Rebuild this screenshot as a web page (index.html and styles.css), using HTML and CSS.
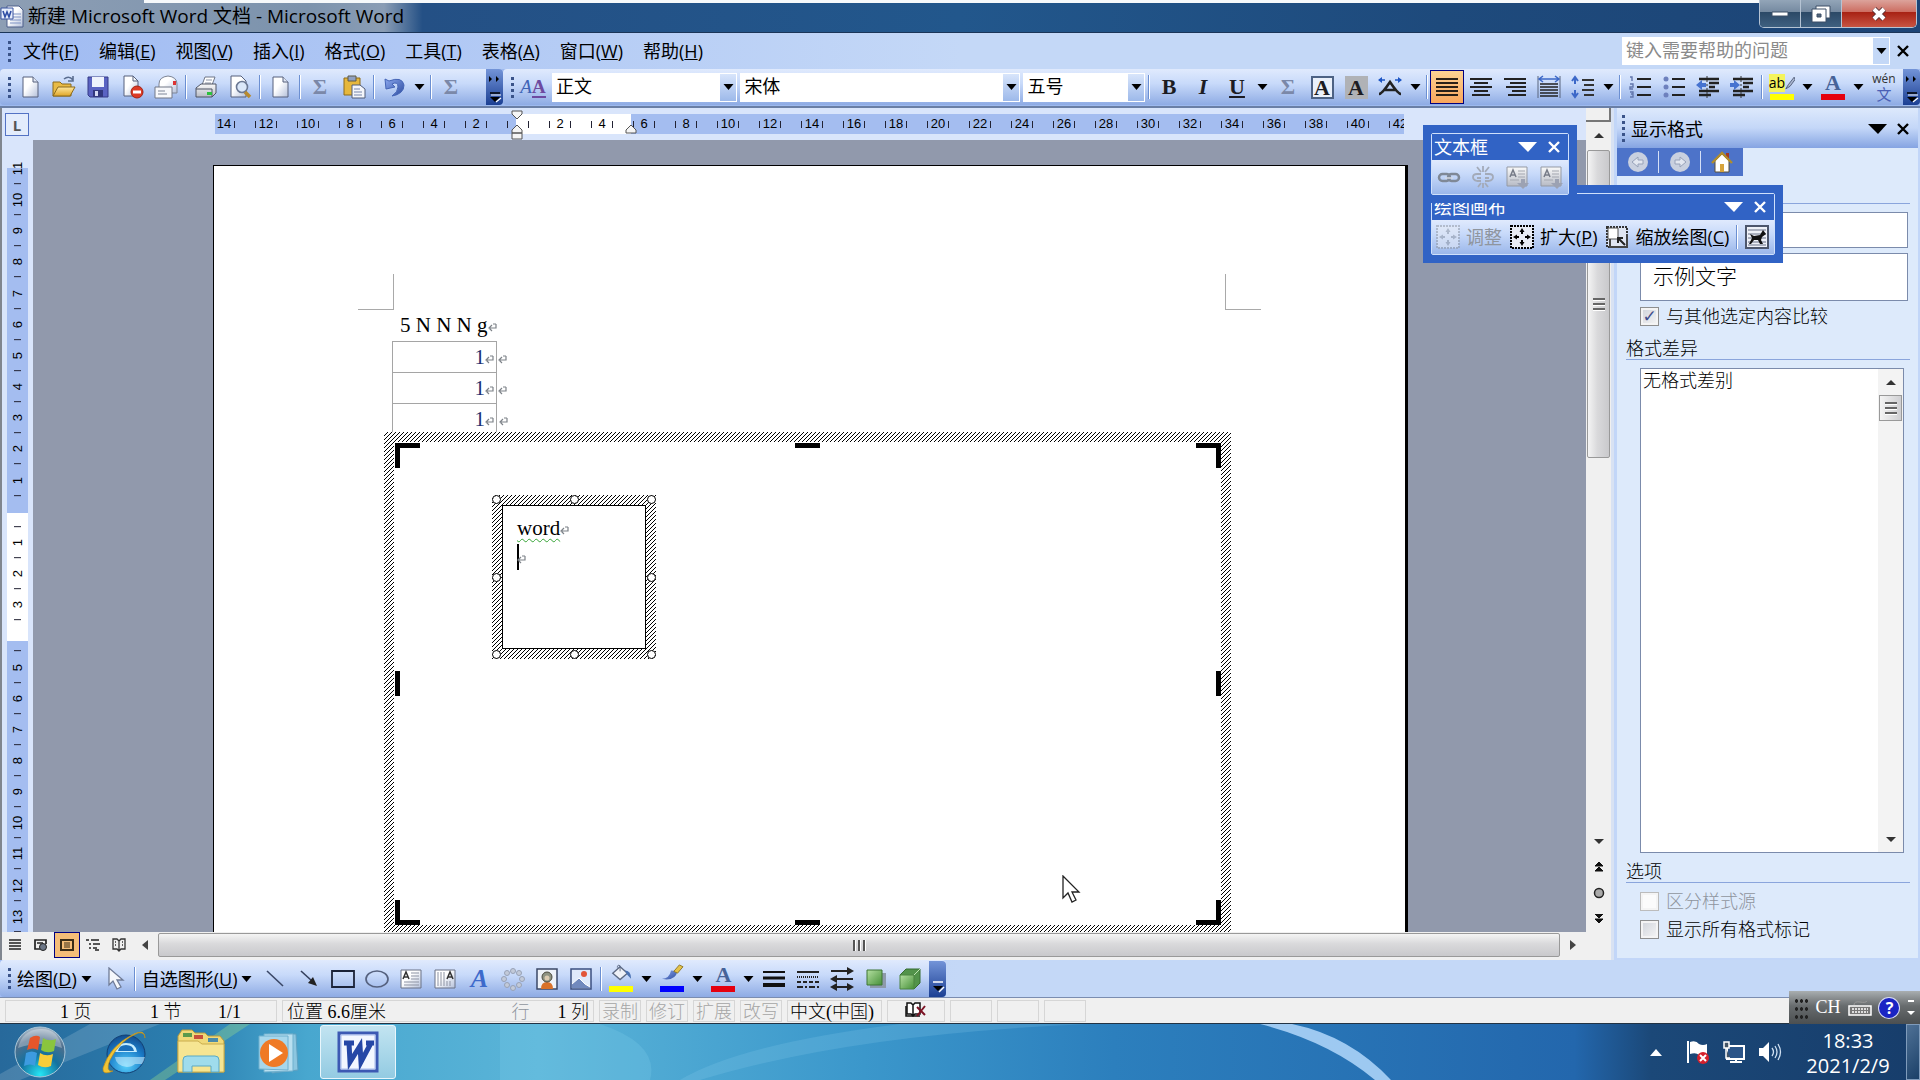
FILE: index.html
```html
<!DOCTYPE html>
<html lang="zh-CN">

<head>
    <meta charset="UTF-8">
    <meta name="viewport" content="width=device-width, initial-scale=1.0">
    <title>新建 Microsoft Word 文档 - Microsoft Word</title>
    <link rel="stylesheet" href="styles.css">
</head>

<body>
    <!-- shared symbols -->
    <svg class="defs" aria-hidden="true">
        <defs>
            <linearGradient id="gPage" x1="0" y1="0" x2="1" y2="1"><stop offset="0.4" stop-color="#fff"/><stop offset="1" stop-color="#b4c0da"/></linearGradient>
            <linearGradient id="gFolder" x1="0" y1="0" x2="0" y2="1"><stop offset="0" stop-color="#ffe9a0"/><stop offset="1" stop-color="#e0a526"/></linearGradient>
            <linearGradient id="gBlue" x1="0" y1="0" x2="1" y2="1"><stop offset="0" stop-color="#8ba7ee"/><stop offset="1" stop-color="#2c4b9f"/></linearGradient>
            <linearGradient id="gGreen" x1="0" y1="0" x2="1" y2="1"><stop offset="0" stop-color="#b5e0a2"/><stop offset="1" stop-color="#469038"/></linearGradient>
            <linearGradient id="gGray" x1="0" y1="0" x2="0" y2="1"><stop offset="0" stop-color="#fafafa"/><stop offset="1" stop-color="#b6bac4"/></linearGradient>
            <radialGradient id="gOrb" cx="0.5" cy="0.95" r="0.9"><stop offset="0" stop-color="#25e6f5"/><stop offset="0.45" stop-color="#14719f"/><stop offset="0.8" stop-color="#4f6f8d"/><stop offset="1" stop-color="#9fb1c2"/></radialGradient>
            <radialGradient id="gIe" cx="0.5" cy="0.8" r="0.8"><stop offset="0" stop-color="#58d0fb"/><stop offset="0.6" stop-color="#1a7cc9"/><stop offset="1" stop-color="#134b8c"/></radialGradient>
            <symbol id="caret" viewBox="0 0 10 6"><path d="M0 0h10L5 6z"/></symbol>
            <symbol id="cross" viewBox="0 0 12 12"><path d="M1 1l10 10M11 1L1 11" fill="none" stroke="currentColor" stroke-width="2.4"/></symbol>
            <symbol id="para" viewBox="0 0 9 9"><path d="M8 1v4H2M4 2L1 5l3 3M5 1h3" fill="none" stroke="#7d8288" stroke-width="1.2"/></symbol>
            <symbol id="page" viewBox="0 0 24 24"><path d="M5 2h10l5 5v15H5z" fill="url(#gPage)" stroke="#56617c"/><path d="M15 2v5h5" fill="#dfe6f4" stroke="#56617c"/></symbol>
            <symbol id="more" viewBox="0 0 17 36"><path d="M3 7l3 3-3 3zM10 7l3 3-3 3z" fill="#000"/><path d="M4 24h10" stroke="#000" stroke-width="1.5"/><path d="M4 28h10l-5 5z" fill="#000"/><path d="M5 26h10M10 33l5-4" stroke="#fff" stroke-width="1.2"/></symbol>
            <symbol id="fit" viewBox="0 0 24 24"><path d="M1 1h22v22H1z" fill="#e8ecf5" stroke="currentColor" stroke-width="2" stroke-dasharray="2 1"/><path d="M12 5v4M12 15v4M5 12h4M15 12h4" stroke="currentColor" stroke-width="2"/><path d="M9.500 7L12 3l2.500 4zM9.500 17l2.500 4 2.500-4zM7 9.500L3 12l4 2.500zM17 9.500l4 2.500-4 2.500z" fill="currentColor"/></symbol>
            <symbol id="memo" viewBox="0 0 24 24"><path d="M2 2h20v19H2z" fill="url(#gGray)" stroke="#9499a3"/><path d="M5 12L8 5l3 7M6 10h4" stroke="#777c88" stroke-width="1.500" fill="none"/><path d="M13 6h7M13 9h7M13 12h7M5 15h9" stroke="#a3a7b0"/><path d="M18 14v5" stroke="#9ca2b3" stroke-width="4"/><path d="M12 18h12l-6 6z" fill="#9ca2b3"/></symbol>
        </defs>
    </svg>

    <header class="titlebar">
        <svg class="icon" viewBox="0 0 24 24"><path d="M7 2h12l4 4v17H7z" fill="url(#gPage)" stroke="#4d5e8a"/><path d="M13 10h8M13 13h8M10 16h11M10 19h11" stroke="#7f93c4"/><path d="M1 4h12v11H1z" fill="#e7eefc" stroke="#3a55a0"/><path d="M3 7l2 6 2-5 2 5 2-6" fill="none" stroke="#2e4da5" stroke-width="1.600"/></svg>
        <h1>新建 Microsoft Word 文档 - Microsoft Word</h1>
        <div class="window-buttons">
            <button aria-label="最小化"><svg width="18" height="6"><path d="M1 1h16v4H1z" fill="#fff" stroke="#3c4f66"/></svg></button>
            <button aria-label="还原"><svg width="20" height="18"><path d="M5 1h14v12H5z" fill="#fff" stroke="#3c4f66"/><path d="M1 4h14v13H1z" fill="#fff" stroke="#3c4f66"/><path d="M6 9h4v3H6z" fill="#53677d" stroke="#3c4f66"/></svg></button>
            <button class="close" aria-label="关闭"><svg width="18" height="16"><path d="M4 3l10 10M14 3L4 13" stroke="#5b3337" stroke-width="6"/><path d="M4 3l10 10M14 3L4 13" stroke="#fff" stroke-width="4"/></svg></button>
        </div>
    </header>

    <nav class="menubar">
        <i class="grip"></i>
        <button>文件(<u>F</u>)</button>
        <button>编辑(<u>E</u>)</button>
        <button>视图(<u>V</u>)</button>
        <button>插入(<u>I</u>)</button>
        <button>格式(<u>O</u>)</button>
        <button>工具(<u>T</u>)</button>
        <button>表格(<u>A</u>)</button>
        <button>窗口(<u>W</u>)</button>
        <button>帮助(<u>H</u>)</button>
        <div class="help-box">
            <input type="text" aria-label="帮助" placeholder="键入需要帮助的问题">
            <button class="drop" aria-label="展开"><svg width="11" height="6"><use href="#caret"/></svg></button>
        </div>
        <button class="close-doc" aria-label="关闭文档"><svg width="12" height="12"><use href="#cross"/></svg></button>
    </nav>

    <div class="toolbars">
        <div class="toolbar standard">
            <i class="grip"></i>
            <button class="tool" aria-label="新建"><svg class="icon"><use href="#page"/></svg></button>
            <button class="tool" aria-label="打开"><svg class="icon" viewBox="0 0 24 24"><path d="M1 21V7h7l2 2h9v12z" fill="#e9bb45" stroke="#8b6a1c"/><path d="M1 21l5-9h17l-5 9z" fill="url(#gFolder)" stroke="#8b6a1c"/><path d="M12 4q5-4 9 1M21 1v5h-5" fill="none" stroke="#5a6d8f" stroke-width="1.600"/></svg></button>
            <button class="tool" aria-label="保存"><svg class="icon" viewBox="0 0 24 24"><path d="M2 2h20v20H4l-2-2z" fill="#5a63c2" stroke="#343a86"/><path d="M6 2h12v10H6z" fill="#eef2fc"/><path d="M7 15h10v7H7z" fill="#32387e"/><path d="M9 16h3v5H9z" fill="#d6dcf4"/></svg></button>
            <button class="tool" aria-label="权限"><svg class="icon" viewBox="0 0 24 24"><path d="M4 1h9l5 5v15H4z" fill="url(#gPage)" stroke="#56617c"/><path d="M13 1v5h5" fill="none" stroke="#56617c"/><circle cx="17" cy="17" r="6" fill="#dc3a25" stroke="#a32213"/><path d="M13 17h8" stroke="#fff" stroke-width="3"/></svg></button>
            <button class="tool" aria-label="电子邮件"><svg class="icon" viewBox="0 0 24 24"><path d="M5 9q0-7 9-8 9 1 9 8v9H5z" fill="url(#gPage)" stroke="#7e8594"/><path d="M19 6h3v4h-3z" fill="#d33"/><path d="M1 12h17v11H1z" fill="#f7f8fb" stroke="#737987"/><path d="M4 16h7M4 19h9" stroke="#7c8597"/></svg></button>
            <i class="sep"></i>
            <button class="tool" aria-label="打印"><svg class="icon" viewBox="0 0 24 24"><path d="M8 10l3-8h10l-3 8z" fill="#fff" stroke="#6f7788"/><path d="M12 5h6M11 8h6" stroke="#8d95a7"/><path d="M2 13l5-4h15v9l-4 4H2z" fill="url(#gGray)" stroke="#4e5564"/><path d="M2 14h16v8" fill="none" stroke="#4e5564"/><path d="M13 17h5v3h-5z" fill="#2cc13c"/></svg></button>
            <button class="tool" aria-label="打印预览"><svg class="icon" viewBox="0 0 24 24"><path d="M3 1h10l5 5v16H3z" fill="url(#gPage)" stroke="#56617c"/><circle cx="14" cy="12" r="5.500" fill="#dbe8fa" stroke="#6b7893" stroke-width="1.600"/><path d="M17 17l5 5" stroke="#b88a2e" stroke-width="3.500"/></svg></button>
            <i class="sep"></i>
            <button class="tool" aria-label="新建空白文档"><svg class="icon"><use href="#page"/></svg></button>
            <i class="sep"></i>
            <button class="tool sigma">Σ</button>
            <button class="tool" aria-label="粘贴"><svg class="icon" viewBox="0 0 24 24"><path d="M2 3h16v17H2z" fill="#e6b73c" stroke="#8d6a18"/><path d="M6 1h8v5H6z" fill="#8fa0c2" stroke="#5f5a44"/><path d="M10 10h8l5 4v9H10z" fill="#f4f6fb" stroke="#515c78"/><path d="M12 14h6M12 17h8M12 20h8" stroke="#7685ab"/></svg></button>
            <i class="sep"></i>
            <button class="tool" aria-label="撤消"><svg class="icon" viewBox="0 0 24 24"><path d="M3 4l1 10 9-2-3-3q6-3 6 3 0 5-6 9 12-2 12-11Q20 1 7 6z" fill="url(#gBlue)" stroke="#4565b6"/></svg></button>
            <button class="arrow" aria-label="撤消列表"><svg width="11" height="6"><use href="#caret"/></svg></button>
            <i class="sep"></i>
            <button class="tool sigma">Σ</button>
            <button class="cap" aria-label="工具栏选项"><svg width="17" height="36"><use href="#more"/></svg></button>
        </div>
        <div class="toolbar format">
            <i class="grip"></i>
            <button class="tool styles-btn" aria-label="格式窗格"><i>A</i><b>A</b></button>
            <div class="combo style-combo"><select aria-label="样式"><option>正文</option></select><span class="drop"><svg width="11" height="6"><use href="#caret"/></svg></span></div>
            <div class="combo font-combo"><select aria-label="字体"><option>宋体</option></select><span class="drop"><svg width="11" height="6"><use href="#caret"/></svg></span></div>
            <div class="combo size-combo"><select aria-label="字号"><option>五号</option></select><span class="drop"><svg width="11" height="6"><use href="#caret"/></svg></span></div>
            <i class="sep"></i>
            <button class="tool letter"><b>B</b></button>
            <button class="tool letter"><b><i>I</i></b></button>
            <button class="tool letter"><b><u>U</u></b></button>
            <button class="arrow" aria-label="下划线样式"><svg width="11" height="6"><use href="#caret"/></svg></button>
            <button class="tool sigma">Σ</button>
            <button class="tool letter"><span class="boxed">A</span></button>
            <button class="tool letter"><span class="boxed shaded">A</span></button>
            <button class="tool" aria-label="字符缩放"><svg class="icon" viewBox="0 0 24 24"><path d="M1 19q3 0 11-12 8 12 11 12M7 15h10" fill="none" stroke="#222" stroke-width="2.600"/><path d="M1 5h6M17 5h6" stroke="#1d55c4" stroke-width="1.500"/><path d="M4 2L0 5l4 3zM20 2l4 3-4 3z" fill="#1d55c4"/></svg></button>
            <button class="arrow" aria-label="缩放列表"><svg width="11" height="6"><use href="#caret"/></svg></button>
            <i class="sep"></i>
            <button class="tool active" aria-label="两端对齐"><svg class="icon" viewBox="0 0 24 24"><path d="M1 4h22M1 8h22M1 12h22M1 16h22M1 20h22" stroke="#2a2118" stroke-width="2"/></svg></button>
            <button class="tool" aria-label="居中"><svg class="icon" viewBox="0 0 24 24"><path d="M1 4h22M5 8h14M1 12h22M5 16h14M3 20h18" stroke="#222" stroke-width="2"/></svg></button>
            <button class="tool" aria-label="右对齐"><svg class="icon" viewBox="0 0 24 24"><path d="M1 4h22M7 8h16M3 12h20M9 16h14M5 20h18" stroke="#222" stroke-width="2"/></svg></button>
            <button class="tool" aria-label="分散对齐"><svg class="icon" viewBox="0 0 24 24"><path d="M1 1v22M23 1v22" stroke="#59647d"/><path d="M3 4h18M6 1L2 4l4 3M18 1l4 3-4 3" fill="none" stroke="#3c68c8" stroke-width="1.500"/><path d="M3 9h18M3 12h18M3 15h18M3 18h18M3 21h18" stroke="#222" stroke-width="1.700"/></svg></button>
            <button class="tool" aria-label="行距"><svg class="icon" viewBox="0 0 24 24"><path d="M4 3v6M4 15v6M1 6l3-4 3 4M1 18l3 4 3-4" fill="none" stroke="#3c68c8" stroke-width="2"/><path d="M11 5h12M13 10h10M11 15h12M13 20h10" stroke="#333" stroke-width="2"/></svg></button>
            <button class="arrow" aria-label="行距列表"><svg width="11" height="6"><use href="#caret"/></svg></button>
            <i class="sep"></i>
            <button class="tool" aria-label="编号"><svg class="icon" viewBox="0 0 24 24"><path d="M9 4h14M9 12h14M9 20h14" stroke="#222" stroke-width="2"/><path d="M2 2h2v4M2 9h3v3H2v2h3M2 17h3v5H2M3 19h2" fill="none" stroke="#6276ac" stroke-width="1.400"/></svg></button>
            <button class="tool" aria-label="项目符号"><svg class="icon" viewBox="0 0 24 24"><path d="M10 4h13M10 12h13M10 20h13" stroke="#222" stroke-width="2"/><g fill="#6d80bd"><circle cx="4" cy="4" r="2.500"/><circle cx="4" cy="12" r="2.500"/><circle cx="4" cy="20" r="2.500"/></g></svg></button>
            <button class="tool" aria-label="减少缩进量"><svg class="icon" viewBox="0 0 24 24"><path d="M3 4h20M13 8h10M13 12h6M3 16h20M3 20h12" stroke="#222" stroke-width="2.400"/><path d="M11 1v22" stroke="#333" stroke-dasharray="2 2"/><path d="M0 10l6-5v3h4v4H6v3z" fill="#4673d0"/></svg></button>
            <button class="tool" aria-label="增加缩进量"><svg class="icon" viewBox="0 0 24 24"><path d="M3 4h20M13 8h10M13 12h6M3 16h20M3 20h12" stroke="#222" stroke-width="2.400"/><path d="M11 1v22" stroke="#333" stroke-dasharray="2 2"/><path d="M10 10L4 5v3H0v4h4v3z" fill="#4673d0"/></svg></button>
            <i class="sep"></i>
            <button class="tool color-tool yellow"><span class="mark">ab</span><svg class="pen" width="10" height="16" viewBox="0 0 12 16"><path d="M11 1L4 10l-3 5 5-3 6-8z" fill="#a9b5cf" stroke="#46536f"/></svg></button>
            <button class="arrow" aria-label="突出显示颜色"><svg width="11" height="6"><use href="#caret"/></svg></button>
            <button class="tool color-tool red"><b>A</b></button>
            <button class="arrow" aria-label="字体颜色列表"><svg width="11" height="6"><use href="#caret"/></svg></button>
            <button class="tool pinyin"><span>wén</span><span>文</span></button>
            <button class="cap" aria-label="工具栏选项"><svg width="17" height="36"><use href="#more"/></svg></button>
        </div>
    </div>

    <main class="workspace">
        <section class="editor">
            <div class="ruler-row">
                <button class="tab-stop">L</button>
                <div class="h-ruler">
                    <div class="h-cells">
                        <span>14</span><span>12</span><span>10</span><span>8</span><span>6</span><span>4</span><span>2</span><span></span><span>2</span><span>4</span><span>6</span><span>8</span><span>10</span><span>12</span><span>14</span><span>16</span><span>18</span><span>20</span><span>22</span><span>24</span><span>26</span><span>28</span><span>30</span><span>32</span><span>34</span><span>36</span><span>38</span><span>40</span><span>42</span>
                    </div>
                    <svg class="indent left-indent" width="12" height="30"><path d="M1 1h10v3L6 9 1 4zM6 15l5 5v3H1v-3zM1 23h10v6H1z" fill="#f5f5f5" stroke="#555"/></svg>
                    <svg class="indent right-indent" width="12" height="10"><path d="M6 1l5 5v3H1V6z" fill="#f5f5f5" stroke="#555"/></svg>
                </div>
            </div>
            <div class="doc-row">
                <div class="v-ruler">
                    <div class="v-cells">
                        <span>11</span><span>10</span><span>9</span><span>8</span><span>7</span><span>6</span><span>5</span><span>4</span><span>3</span><span>2</span><span>1</span><span></span><span>1</span><span>2</span><span>3</span><span></span><span>5</span><span>6</span><span>7</span><span>8</span><span>9</span><span>10</span><span>11</span><span>12</span><span>13</span>
                    </div>
                </div>
                <div class="desk">
                    <article class="sheet">
                        <div class="crop-marks"><i></i><i></i></div>
                        <p class="doc-line">5 N N N g<svg class="para"><use href="#para"/></svg></p>
                        <table class="doc-table">
                            <tr><td>1<svg class="para"><use href="#para"/></svg></td><td class="row-end"><svg class="para"><use href="#para"/></svg></td></tr>
                            <tr><td>1<svg class="para"><use href="#para"/></svg></td><td class="row-end"><svg class="para"><use href="#para"/></svg></td></tr>
                            <tr><td>1<svg class="para"><use href="#para"/></svg></td><td class="row-end"><svg class="para"><use href="#para"/></svg></td></tr>
                        </table>
                        <div class="canvas">
                            <div class="canvas-inner">
                                <i class="hold tl"></i><i class="hold tc"></i><i class="hold tr"></i>
                                <i class="hold ml"></i><i class="hold mr"></i>
                                <i class="hold bl"></i><i class="hold bc"></i><i class="hold br"></i>
                                <div class="text-box">
                                    <div class="text-body">
                                        <p><span class="typo">word</span><svg class="para"><use href="#para"/></svg></p>
                                        <p class="cursor-line"><svg class="para"><use href="#para"/></svg></p>
                                    </div>
                                    <i class="dot d1"></i><i class="dot d2"></i><i class="dot d3"></i><i class="dot d4"></i>
                                    <i class="dot d5"></i><i class="dot d6"></i><i class="dot d7"></i><i class="dot d8"></i>
                                </div>
                                <svg class="pointer" width="19" height="29" viewBox="0 0 19 29"><path d="M1 1v22l5-5 4 9 4-2-4-8h7z" fill="#fff" stroke="#222" stroke-width="1.300"/></svg>
                            </div>
                        </div>
                    </article>
                </div>
            </div>
            <div class="h-scroll">
                <button aria-label="普通视图"><svg width="16" height="16"><path d="M2 3h12M2 6h12M2 9h12M2 12h12" stroke="#222" stroke-width="1.500"/></svg></button>
                <button aria-label="Web 版式视图"><svg width="16" height="16"><path d="M7 12H2V3h11v4M4 6h6" fill="none" stroke="#222" stroke-width="1.700"/><circle cx="10" cy="10" r="3.500" fill="#6c7686" stroke="#222"/></svg></button>
                <button class="active" aria-label="页面视图"><svg width="16" height="16"><path d="M2 3h12v10H2z" fill="none" stroke="#3b2c16" stroke-width="2"/><path d="M5 6h6M5 8h6M5 10h6" stroke="#3b2c16"/></svg></button>
                <button aria-label="大纲视图"><svg width="16" height="16"><path d="M1 3h3M6 3h8M4 7h2M8 7h7M4 11h2M8 11h4M10 13h4" stroke="#222" stroke-width="1.700"/></svg></button>
                <button aria-label="阅读版式"><svg width="16" height="16"><path d="M8 4L6 2H2v10h4l2 2 2-2h4V2h-4zM8 4v10M4 5h1M4 8h1M11 5h1M11 8h1" fill="none" stroke="#333" stroke-width="1.300"/></svg></button>
                <button aria-label="向左滚动"><svg width="6" height="10"><path d="M6 0v10L0 5z" fill="#444"/></svg></button>
                <div class="h-thumb"><i></i><i></i><i></i></div>
                <button aria-label="向右滚动"><svg width="6" height="10"><path d="M0 0v10l6-5z" fill="#444"/></svg></button>
            </div>
        </section>

        <div class="v-scroll">
            <div class="split"></div>
            <button aria-label="向上滚动"><svg width="10" height="5"><path d="M0 5h10L5 0z" fill="#333"/></svg></button>
            <div class="v-track"><div class="v-thumb"><i></i><i></i><i></i></div></div>
            <button aria-label="向下滚动"><svg width="10" height="5"><path d="M0 0h10L5 5z" fill="#333"/></svg></button>
            <button aria-label="前一页"><svg width="10" height="10"><path d="M5 0l4 4H1zM5 5l4 4H1z" fill="#111" stroke="#111"/></svg></button>
            <button aria-label="选择浏览对象"><svg width="12" height="12"><circle cx="6" cy="6" r="4.500" fill="#aaa" stroke="#222" stroke-width="1.500"/></svg></button>
            <button aria-label="下一页"><svg width="10" height="10"><path d="M5 4l4-4H1zM5 9l4-4H1z" fill="#111" stroke="#111"/></svg></button>
        </div>

        <aside class="pane">
            <div class="pane-head">
                <i class="grip"></i>
                <h2>显示格式</h2>
                <button aria-label="其他任务窗格"><svg width="19" height="10"><path d="M0 0h19l-9 10z"/></svg></button>
                <button aria-label="关闭窗格"><svg width="12" height="12"><use href="#cross"/></svg></button>
            </div>
            <div class="pane-nav">
                <button aria-label="后退"><svg width="22" height="22"><circle cx="11" cy="11" r="10" fill="#c9d0df"/><path d="M16 9h-5V6l-6 5 6 5v-3h5z" fill="#e3e7f0" stroke="#98a2b9"/></svg></button>
                <button aria-label="前进"><svg width="22" height="22"><circle cx="11" cy="11" r="10" fill="#c9d0df"/><path d="M6 9h5V6l6 5-6 5v-3H6z" fill="#e3e7f0" stroke="#98a2b9"/></svg></button>
                <button aria-label="开始"><svg width="22" height="22"><path d="M15 2h3v6h-3z" fill="#a03a28"/><path d="M4 10l7-7 7 7v11H4z" fill="#fff" stroke="#5a5136"/><path d="M1 12L11 2l10 10" fill="none" stroke="#b08d2c" stroke-width="2.400"/><path d="M9 13h4v8H9z" fill="#d6a33c"/></svg></button>
            </div>
            <div class="pane-body">
                <div class="pane-rule first"></div>
                <div class="sample"></div>
                <div class="sample tall">示例文字</div>
                <label class="check"><input type="checkbox" checked>与其他选定内容比较</label>
                <h3 class="pane-rule">格式差异</h3>
                <div class="diff-list">
                    <p>无格式差别</p>
                    <div class="list-scroll">
                        <button aria-label="向上"><svg width="10" height="5"><path d="M0 5h10L5 0z" fill="#333"/></svg></button>
                        <div class="list-thumb"><i></i><i></i><i></i></div>
                        <button class="down" aria-label="向下"><svg width="10" height="5"><path d="M0 0h10L5 5z" fill="#333"/></svg></button>
                    </div>
                </div>
                <h3 class="pane-rule options">选项</h3>
                <label class="check off"><input type="checkbox" disabled>区分样式源</label>
                <label class="check"><input type="checkbox">显示所有格式标记</label>
            </div>
        </aside>

        <!-- floating toolbars -->
        <div class="float float-canvas">
            <div class="float-box">
                <div class="float-head"><span>绘图画布</span><button aria-label="选项"><svg width="19" height="10"><path d="M0 0h19l-9 10z" fill="#fff"/></svg></button><button aria-label="关闭"><svg width="12" height="12"><use href="#cross"/></svg></button></div>
                <div class="float-tools">
                    <button class="text-tool off"><svg class="icon"><use href="#fit"/></svg>调整</button>
                    <button class="text-tool"><svg class="icon"><use href="#fit"/></svg><span>扩大(<u>P</u>)</span></button>
                    <button class="text-tool"><svg class="icon" viewBox="0 0 24 24"><path d="M2 2h20v20H2z" fill="#dfe5f2" stroke="#333" stroke-width="2" stroke-dasharray="2 1"/><path d="M3 3h10v11H3z" fill="#fff" stroke="#555"/><path d="M5 14v8h17V9" fill="none" stroke="#444" stroke-width="2"/><path d="M20 20l-6-6M13 18v-5h5" fill="none" stroke="#222" stroke-width="2"/></svg><span>缩放绘图(<u>C</u>)</span></button>
                    <i class="sep"></i>
                    <button class="tool" aria-label="文字环绕"><svg class="icon" viewBox="0 0 24 24"><path d="M1 1h22v22H1z" fill="#eef1f8" stroke="#4c566c" stroke-width="2"/><path d="M3 5h18M3 9h18M3 13h18M3 17h18M3 20h18" stroke="#687086"/><path d="M5 9l4 2 6-1 3-5 3 4-4 3-1 3 2 4h-3l-2-4H9l-3 4H4l3-6z" fill="#111"/></svg></button>
                </div>
            </div>
        </div>
        <div class="float float-textbox">
            <div class="float-box">
                <div class="float-head"><span>文本框</span><button aria-label="选项"><svg width="19" height="10"><path d="M0 0h19l-9 10z" fill="#fff"/></svg></button><button aria-label="关闭"><svg width="12" height="12"><use href="#cross"/></svg></button></div>
                <div class="float-tools">
                    <button class="tool" aria-label="创建链接"><svg class="icon" viewBox="0 0 24 24"><g fill="none" stroke="#7f8896" stroke-width="2.500"><rect x="2" y="9" width="11" height="7" rx="3.500"/><rect x="11" y="9" width="11" height="7" rx="3.500"/></g><path d="M8 13h8" stroke="#d5dae4" stroke-width="1.500"/></svg></button>
                    <button class="tool" aria-label="断开链接"><svg class="icon" viewBox="0 0 24 24"><path d="M10 9H6q-4 0-4 3t4 4h4M14 9h4q4 0 4 3t-4 4h-4M12 1v6M6 2l4 5M18 2l-4 5M12 18v5M10 18l-3 4M14 18l3 4M6 13h4M14 13h4" fill="none" stroke="#a3aab8" stroke-width="1.800"/></svg></button>
                    <button class="tool" aria-label="前一文本框"><svg class="icon"><use href="#memo"/></svg></button>
                    <button class="tool" aria-label="下一文本框"><svg class="icon"><use href="#memo"/></svg></button>
                </div>
            </div>
        </div>
    </main>

    <div class="draw-row">
        <div class="toolbar drawing">
            <i class="grip"></i>
            <button class="menu-tool"><span>绘图(<u>D</u>)</span><svg width="11" height="6"><use href="#caret"/></svg></button>
            <button class="tool" aria-label="选择对象"><svg class="icon" viewBox="0 0 24 24"><path d="M6 1v17l4-4 4 8 4-2-4-7h6z" fill="#f6f8fc" stroke="#6f7b96" stroke-width="1.300"/></svg></button>
            <i class="sep"></i>
            <button class="menu-tool"><span>自选图形(<u>U</u>)</span><svg width="11" height="6"><use href="#caret"/></svg></button>
            <button class="tool" aria-label="直线"><svg class="icon" viewBox="0 0 24 24"><path d="M4 4l16 15" stroke="#3a4766" stroke-width="1.600"/></svg></button>
            <button class="tool" aria-label="箭头"><svg class="icon" viewBox="0 0 24 24"><path d="M4 4l11 10" stroke="#333f5c" stroke-width="1.600"/><path d="M20 19l-9-3 5-6z" fill="#222"/></svg></button>
            <button class="tool" aria-label="矩形"><svg class="icon" viewBox="0 0 24 24"><path d="M1 4h22v16H1z" fill="none" stroke="#1b2338" stroke-width="1.800"/></svg></button>
            <button class="tool" aria-label="椭圆"><svg class="icon" viewBox="0 0 24 24"><ellipse cx="12" cy="12" rx="11" ry="8" fill="none" stroke="#56627f" stroke-width="1.700"/></svg></button>
            <button class="tool" aria-label="文本框"><svg class="icon" viewBox="0 0 24 24"><path d="M2 3h20v18H2z" fill="url(#gPage)" stroke="#6a7286"/><path d="M4 12l3-7 3 7M5 10h4" stroke="#333" stroke-width="1.500" fill="none"/><path d="M12 6h8M12 9h8M12 12h8M5 15h15M5 18h15" stroke="#8d93a3"/></svg></button>
            <button class="tool" aria-label="竖排文本框"><svg class="icon" viewBox="0 0 24 24"><path d="M2 3h20v18H2z" fill="url(#gPage)" stroke="#6a7286"/><path d="M14 12l3-7 3 7M15 10h4" stroke="#333" stroke-width="1.500" fill="none"/><path d="M5 5v14M8 5v14M11 5v14M14 14v5M17 14v5" stroke="#8d93a3"/></svg></button>
            <button class="tool wordart"><i>A</i></button>
            <button class="tool" aria-label="组织结构图"><svg class="icon" viewBox="0 0 24 24"><g fill="#c2cad9" stroke="#98a2b6"><circle cx="12" cy="4" r="2.500"/><circle cx="18" cy="6" r="2.500"/><circle cx="21" cy="12" r="2.500"/><circle cx="18" cy="18" r="2.500"/><circle cx="12" cy="21" r="2.500"/><circle cx="6" cy="18" r="2.500"/><circle cx="3" cy="12" r="2.500"/><circle cx="6" cy="6" r="2.500"/></g></svg></button>
            <button class="tool" aria-label="剪贴画"><svg class="icon" viewBox="0 0 24 24"><path d="M2 2h20v20H2z" fill="#eef2f8" stroke="#3b4867" stroke-width="1.500"/><path d="M6 22q0-7 6-7t6 7z" fill="#d9722a"/><circle cx="12" cy="10" r="5" fill="#8f9382" stroke="#4c4a3d"/><circle cx="12" cy="11" r="2.500" fill="#dccbb0"/></svg></button>
            <button class="tool" aria-label="图片"><svg class="icon" viewBox="0 0 24 24"><path d="M2 2h20v20H2z" fill="#dfe9fb" stroke="#3b4f80" stroke-width="1.500"/><path d="M3 21v-4l7-6 6 6 5 3v1z" fill="#7189bd"/><path d="M3 17l7-6 6 6 5 3" stroke="#fff" fill="none"/><circle cx="15" cy="7" r="3" fill="#e25538"/></svg></button>
            <i class="sep"></i>
            <button class="tool color-tool yellow" aria-label="填充"><svg class="icon" viewBox="0 0 24 24"><path d="M3 10l8-7 8 7-8 7z" fill="#eef1f7" stroke="#5d6a84" stroke-width="1.500"/><path d="M11 8V2Q8 0 8 4" fill="none" stroke="#5d6a84"/><path d="M16 7q7 0 7 9l-4-4z" fill="#4a72b2"/></svg></button>
            <button class="arrow" aria-label="填充颜色"><svg width="11" height="6"><use href="#caret"/></svg></button>
            <button class="tool color-tool blue" aria-label="线条"><svg class="icon" viewBox="0 0 24 24"><path d="M1 16q8 0 10-9l7 1q-2 9-12 9z" fill="url(#gBlue)"/><path d="M14 8l6-7 4 2-6 7z" fill="#e4c249" stroke="#8c7524"/></svg></button>
            <button class="arrow" aria-label="线条颜色"><svg width="11" height="6"><use href="#caret"/></svg></button>
            <button class="tool color-tool red"><b>A</b></button>
            <button class="arrow" aria-label="字体颜色"><svg width="11" height="6"><use href="#caret"/></svg></button>
            <button class="tool" aria-label="线型"><svg class="icon" viewBox="0 0 24 24"><path d="M1 5h22" stroke="#111" stroke-width="2"/><path d="M1 11h22" stroke="#111" stroke-width="3"/><path d="M1 18h22" stroke="#111" stroke-width="4"/></svg></button>
            <button class="tool" aria-label="虚线线型"><svg class="icon" viewBox="0 0 24 24"><path d="M1 5h22" stroke="#222" stroke-width="2"/><path d="M1 10h22" stroke="#222" stroke-width="2" stroke-dasharray="1 1"/><path d="M1 15h22" stroke="#222" stroke-width="2" stroke-dasharray="4 2"/><path d="M1 20h22" stroke="#222" stroke-width="2" stroke-dasharray="6 2 2 2"/></svg></button>
            <button class="tool" aria-label="箭头样式"><svg class="icon" viewBox="0 0 24 24"><path d="M1 4h20M3 12h20M3 20h18" stroke="#222" stroke-width="1.800"/><path d="M17 0l7 4-7 4zM7 8l-7 4 7 4zM17 16l7 4-7 4zM7 16l-7 4 7 4z" fill="#222"/></svg></button>
            <button class="tool" aria-label="阴影样式"><svg class="icon" viewBox="0 0 24 24"><path d="M6 6h16v15H6z" fill="#8d9aab"/><path d="M3 3h15v15H3z" fill="url(#gGreen)" stroke="#3d7434"/></svg></button>
            <button class="tool" aria-label="三维效果样式"><svg class="icon" viewBox="0 0 24 24"><path d="M2 8l6-6h14v14l-6 6z" fill="#52934a" stroke="#376d30"/><path d="M2 8h14v14H2z" fill="url(#gGreen)" stroke="#4b8441"/><path d="M16 8l6-6" stroke="#bfe5b4"/></svg></button>
            <button class="cap low" aria-label="工具栏选项"><svg width="17" height="36"><path d="M4 21h10" stroke="#fff" stroke-width="1.500"/><path d="M4 25h10l-5 5z"/><path d="M10 31l5-5" stroke="#fff" stroke-width="1.500"/></svg></button>
        </div>
    </div>

    <footer class="statusbar">
        <div class="cell pages"><span>1 页</span><span>1 节</span><span>1/1</span></div>
        <div class="cell position"><span>位置 6.6厘米</span><span class="off">行</span><span>1 列</span></div>
        <div class="cell off">录制</div>
        <div class="cell off">修订</div>
        <div class="cell off">扩展</div>
        <div class="cell off">改写</div>
        <div class="cell lang">中文(中国)</div>
        <div class="cell book"><svg width="22" height="16"><path d="M8 3L6 1H2v11h4l2 2 2-2h5V1h-5zM8 3v11" fill="#fff" stroke="#111" stroke-width="1.500"/><path d="M1 4v10h14" fill="none" stroke="#111" stroke-width="1.500"/><path d="M12 5l8 8M20 4l-8 10" fill="none" stroke="#7c1324" stroke-width="2"/></svg></div>
        <div class="cell blank"></div>
        <div class="cell blank"></div>
        <div class="cell blank"></div>
    </footer>

    <div class="taskbar">
        <svg class="aurora" viewBox="0 0 1920 56" preserveAspectRatio="none" aria-hidden="true">
            <path d="M0 50L90 0h70L20 56H0z" fill="#fff" opacity="0.150"/>
            <path d="M150 56L230 0h20L165 56z" fill="#9fe08a" opacity="0.350"/>
            <path d="M600 0q60 20 50 56H500V0z" fill="#7fd0ea" opacity="0.250"/>
            <path d="M700 56Q850 10 1090 0h-190Q740 20 680 56z" fill="#8fd0f0" opacity="0.200"/>
            <path d="M1260 0q70 18 115 56h16Q1350 12 1292 0z" fill="#b3d8fb" opacity="0.850"/>
        </svg>
        <button class="start" aria-label="开始"><svg width="52" height="52" viewBox="0 0 52 52"><circle cx="26" cy="26" r="25" fill="url(#gOrb)" stroke="#a9c6d8"/><path d="M4 22Q8 4 26 3t22 19q-22-8-44 0z" fill="#fff" opacity="0.300"/><path d="M16 12q6-4 10-1l-2 13q-5-3-11 0z" fill="#e5562a"/><path d="M29 12q6 4 13 1l-2 12q-7 3-13-1z" fill="#8ac53e"/><path d="M12 27q6-3 11 0l-2 13q-5-3-11 0z" fill="#3d9be0"/><path d="M26 27q6 4 13 1l-2 12q-7 3-13-1z" fill="#f8cd3a"/></svg></button>
        <button class="app" aria-label="Internet Explorer"><svg width="48" height="48" viewBox="0 0 48 48"><circle cx="26" cy="26" r="19" fill="url(#gIe)" stroke="#123f73"/><path d="M15 24q1-9 11-9t11 9z" fill="#c5edff"/><path d="M15 29h30q-1 4-3 7h-7q-3 3-8 3-11-1-12-10z" fill="#d2f1ff" opacity="0.550"/><path d="M18 23q1-6 8-6t8 6z" fill="#1a6fba"/><path d="M45 10Q45 0 32 7 10 18 3 40q-1 8 10 3Q5 44 10 32 20 12 38 5q7-1 7 5z" fill="#f1c435" stroke="#b98d1c" stroke-width="0.700"/></svg></button>
        <button class="app" aria-label="资源管理器"><svg width="48" height="48" viewBox="0 0 48 48"><path d="M1 8l4-6h10l3 3h10l3 3h12l4 5v31H1z" fill="#f0d978" stroke="#b89a3c"/><path d="M6 5h9v4H6z" fill="#5b9a4c"/><path d="M17 7h9v4h-9z" fill="#c8503b"/><path d="M31 10h10v4H31z" fill="#4b8aa8"/><path d="M1 13h20l4 3h22v28H1z" fill="#f6e592" stroke="#c9ac4c"/><path d="M6 32q0-4 4-4h28q4 0 4 4v12h-8v-6H15v6H6z" fill="#9fdcec" stroke="#5aa9c4"/></svg></button>
        <button class="app" aria-label="媒体播放器"><svg width="48" height="48" viewBox="0 0 48 48"><path d="M14 6h28l2 36-26 3z" fill="#8cc6e0" stroke="#5da0c0"/><path d="M10 6h29v37l-29 1z" fill="#b8dff0" stroke="#6fb0ce"/><path d="M5 8h29v34l-29-1z" fill="#a7d7ec" stroke="#6fb0ce"/><circle cx="20" cy="25" r="14" fill="#ef7a26"/><path d="M15 16l14 9-14 9z" fill="#fff"/></svg></button>
        <button class="app running" aria-label="Microsoft Word"><svg width="42" height="42" viewBox="0 0 42 42"><path d="M2 2h38v38H2z" fill="#f3f7ff" stroke="#3c59b3" stroke-width="3"/><path d="M4 4h34v34H4z" fill="none" stroke="#a6bbec"/><path d="M7 12h10M12 12l1 19 10-16 1 16 10-19M29 12h8" fill="none" stroke="#2547a6" stroke-width="5"/></svg></button>
        <div class="tray">
            <svg width="12" height="7"><path d="M0 7h12L6 0z" fill="#fff"/></svg>
            <svg width="24" height="24"><path d="M2 1v22" stroke="#fff" stroke-width="2"/><path d="M4 2q6-2 9 2 4 2 8 0v11q-4 2-8 0-3-3-9-1z" fill="#fff"/><circle cx="17" cy="18" r="6" fill="#d3202c"/><path d="M14 15l6 6M20 15l-6 6" stroke="#fff" stroke-width="2"/></svg>
            <svg width="24" height="24"><path d="M5 6h17v13H5z" fill="#2a5488" stroke="#fff" stroke-width="2"/><path d="M8 22h12M14 19v3" stroke="#fff" stroke-width="2"/><path d="M2 2h5v6H2zM4 8v10h4" fill="#456" stroke="#fff" stroke-width="1.500"/></svg>
            <svg width="24" height="24"><path d="M1 8h4l6-6v20l-6-6H1z" fill="#fff"/><path d="M14 8q3 4 0 8M17 6q4 6 0 12M20 4q5 8 0 16" fill="none" stroke="#cfe0f2" stroke-width="1.300"/></svg>
        </div>
        <div class="clock"><span>18:33</span><span>2021/2/9</span></div>
        <button class="show-desktop" aria-label="显示桌面"></button>
        <div class="lang-bar">
            <i class="lang-grip"></i>
            <span>CH</span>
            <svg width="24" height="16"><path d="M1 6h22v9H1z" fill="#777" stroke="#fff" stroke-width="1.500"/><path d="M4 9h16M4 12h16" stroke="#fff" stroke-width="1.500" stroke-dasharray="2 1"/><path d="M6 5q0-4 6-3t7-1" fill="none" stroke="#999"/></svg>
            <b class="help">?</b>
            <svg width="8" height="18"><path d="M1 2h6" stroke="#fff" stroke-width="2"/><path d="M0 12h8l-4 4z" fill="#fff"/></svg>
        </div>
    </div>
</body>

</html>
```

FILE: styles.css
```css
* {
    box-sizing: border-box;
}

body {
    margin: 0;
    height: 100vh;
    display: flex;
    flex-direction: column;
    overflow: hidden;
    font-family: "Open Sans", "Noto Sans CJK SC", sans-serif;
    font-size: 18px;
    line-height: 24px;
    color: #000;
    background: linear-gradient(to right, #a0bbf2, #c4d8f7 50%);
}

h1, h2, h3, p {
    margin: 0;
    font-size: 18px;
    font-weight: normal;
}

button {
    font: inherit;
    color: inherit;
    background: none;
    border: none;
    padding: 0;
    display: flex;
    align-items: center;
    justify-content: center;
    white-space: pre;
}

.defs {
    position: absolute;
    width: 0;
    height: 0;
}

.icon {
    width: 24px;
    height: 24px;
    flex: none;
}

/* title bar */
.titlebar {
    position: relative;
    flex: none;
    height: 33px;
    display: flex;
    align-items: center;
    color: #000;
    background: linear-gradient(to right, #8d9eb4, #7c93ad 16%, #8a9db5 20%, #245085 22%, #22578c 50%, #1e4a7c 75%, #1c4476);
    border-bottom: 1px solid #1b3558;
}

.titlebar::before {
    content: "";
    position: absolute;
    top: 0;
    left: 144px;
    right: 144px;
    height: 3px;
    background: #f6f9fb;
}

.titlebar h1 {
    flex: 1;
    padding-left: 4px;
    font-size: 19px;
}

.window-buttons {
    position: relative;
    align-self: flex-start;
    display: flex;
    height: 28px;
    margin-right: 3px;
    border: 1px solid #b5c3d3;
    border-top: none;
    border-radius: 0 0 5px 5px;
    overflow: hidden;
}

.window-buttons button {
    width: 41px;
    background: linear-gradient(#93a5b8, #7489a0 45%, #2c4967 46%, #3f6080);
    border-right: 1px solid #b5c3d3;
}

.window-buttons .close {
    width: 74px;
    border: none;
    background: linear-gradient(#dca39b, #cc6c60 45%, #a82214 46%, #c75442);
}

/* menu */
.menubar {
    flex: none;
    height: 36px;
    display: flex;
    align-items: center;
    gap: 20px;
    padding-left: 8px;
}

.menubar > .grip {
    margin-right: -8px;
}

.grip {
    flex: none;
    width: 3px;
    height: 21px;
    background: repeating-linear-gradient(#3a5389 0 3px, transparent 3px 6px);
}

.help-box {
    margin-left: auto;
    display: flex;
    width: 268px;
    height: 28px;
    background: #fff;
}

.help-box input {
    flex: 1;
    min-width: 0;
    border: none;
    padding: 0 4px 2px;
    font: inherit;
    background: #fff;
}

.help-box input::placeholder {
    color: #8a8a8a;
    opacity: 1;
}

.help-box .drop {
    width: 18px;
    border: 1px solid #fff;
    background: #c4d8f7;
}

.close-doc {
    margin: 0 11px 0 -13px;
}

/* toolbars */
.toolbars {
    flex: none;
    display: flex;
    height: 39px;
    border-bottom: 2px solid #6a7fa6;
    background: #9db9ee;
}

.toolbar {
    display: flex;
    align-items: center;
    height: 36px;
    background: linear-gradient(#e0eafd, #c8dafa 40%, #8eabe4);
    border-radius: 4px;
}

.toolbar > .grip {
    margin: 0 2px 0 8px;
}

.standard {
    width: 503px;
}

.standard .cap {
    margin-left: auto;
}

.format {
    flex: 1;
}

.format .cap {
    margin-left: 2px;
}

.tool {
    flex: none;
    width: 34px;
    height: 34px;
}

.tool.active {
    background: linear-gradient(#fcd293, #f9a65c);
    border: 1px solid #000080;
}

.arrow {
    flex: none;
    width: 17px;
    height: 34px;
}

.sep {
    flex: none;
    width: 6px;
    height: 24px;
    background: linear-gradient(to right, transparent 2px, #6b8fd2 2px 3px, #fff 3px 4px, transparent 4px);
}

.cap {
    flex: none;
    width: 17px;
    height: 36px;
    background: linear-gradient(#7394d8, #1b3f93);
    border-radius: 0 4px 4px 0;
}

.cap svg {
    fill: #000;
}

.sigma {
    font: bold 22px "Liberation Serif", serif;
    color: #7b88a8;
}

.letter {
    font: 22px "Liberation Serif", serif;
    color: #1c1c22;
}

.boxed {
    width: 23px;
    height: 23px;
    font-weight: bold;
    line-height: 20px;
    border: 2px solid #4d6284;
    background: #eaf0fa;
}

.shaded {
    background: #b0b2b6;
    border-color: #b0b2b6;
}

.styles-btn {
    margin-right: 2px;
    font: 19px "Liberation Serif", serif;
    color: #3e63b6;
}

.styles-btn b {
    color: #6d4aa0;
    border-bottom: 2px solid #6d4aa0;
    line-height: 19px;
}

.combo {
    display: flex;
    height: 29px;
    margin-right: 3px;
    background: #fff;
}

.style-combo {
    flex: 186;
}

.font-combo {
    flex: 281;
}

.size-combo {
    flex: 122;
    margin-right: 1px;
}

.combo select {
    flex: 1;
    min-width: 0;
    appearance: none;
    border: none;
    padding: 0 4px 2px;
    font: inherit;
    color: #000;
    background: #fff;
}

.combo .drop {
    width: 18px;
    display: flex;
    align-items: center;
    justify-content: center;
    border: 1px solid #fff;
    background: linear-gradient(#d8e5fb, #9db9ea);
}

.color-tool {
    position: relative;
    padding-bottom: 8px;
    font: 22px "Liberation Serif", serif;
    color: #466398;
}

.color-tool::after {
    content: "";
    position: absolute;
    left: 5px;
    right: 5px;
    bottom: 4px;
    height: 6px;
    background: #ff0;
}

.color-tool.red::after {
    background: #e5000e;
}

.color-tool.blue::after {
    background: #00f;
}

.color-tool .icon {
    height: 22px;
}

.mark {
    font: 14px/18px "Open Sans", sans-serif;
    color: #000;
    background: #f4f45c;
}

.pinyin {
    flex-direction: column;
    font-size: 12px;
    line-height: 15px;
    color: #333;
}

.pinyin span + span {
    font-size: 15px;
    line-height: 17px;
    color: #4b5fb5;
}

/* workspace */
.workspace {
    position: relative;
    flex: 1;
    min-height: 0;
    display: flex;
    background: #c4d8f7;
}

.editor {
    flex: 1;
    min-width: 0;
    display: flex;
    flex-direction: column;
    border-left: 2px solid #80868f;
    background: #d9e5fb;
}

.ruler-row {
    flex: none;
    height: 32px;
    display: flex;
    align-items: flex-start;
    padding: 5px 182px 0 3px;
}

.tab-stop {
    flex: none;
    width: 24px;
    height: 23px;
    border: 1px solid #5372c4;
    background: #e3ecfc;
    font-size: 15px;
    font-weight: bold;
    color: #555;
}

.h-ruler {
    position: relative;
    flex: 1;
    min-width: 0;
    height: 20px;
    margin: 1px 0 0 186px;
    font: 13px "Liberation Sans", sans-serif;
    background: linear-gradient(to right, #a4bdf0 301px, #fff 301px 416px, #a4bdf0 416px);
}

.h-cells {
    display: flex;
    overflow: hidden;
}

.h-cells span {
    flex: none;
    width: 42px;
    height: 20px;
    line-height: 20px;
    text-align: center;
    background:
        linear-gradient(#223, #223) 10px 7px / 1px 7px no-repeat,
        linear-gradient(#223, #223) 31px 7px / 1px 7px no-repeat;
}

.h-cells span:first-child {
    margin-left: -12px;
}

.indent {
    position: absolute;
}

.left-indent {
    left: 296px;
    top: -4px;
}

.right-indent {
    left: 410px;
    top: 10px;
}

.doc-row {
    flex: 1;
    min-height: 0;
    display: flex;
}

.v-ruler {
    flex: none;
    width: 31px;
    padding: 13px 5px 0;
}

.v-cells {
    height: 100%;
    display: flex;
    flex-direction: column;
    overflow: hidden;
    font: 13px "Liberation Sans", sans-serif;
    background: linear-gradient(#d9e5fb 15px, #a4bdf0 15px 360px, #fff 360px 488px, #a4bdf0 488px);
}

.v-cells span {
    flex: 1;
    min-height: 0;
    width: 21px;
    line-height: 21px;
    writing-mode: vertical-rl;
    transform: rotate(180deg);
    text-align: center;
    background: linear-gradient(#223, #223) center top / 7px 1px no-repeat;
}

.desk {
    flex: 1;
    min-width: 0;
    padding: 25px 178px 0 180px;
    background: #9199ac;
    overflow: hidden;
}

.sheet {
    min-height: 1400px;
    padding: 108px 178px 0 179px;
    background: #fff;
    border: 1px solid #000;
    border-right-width: 3px;
    font: 21px "Liberation Serif", "Noto Sans CJK SC", serif;
}

.crop-marks {
    display: flex;
    justify-content: space-between;
    height: 36px;
    margin: 0 -34px 0 -35px;
}

.crop-marks i {
    width: 36px;
    border: solid #a9a9a9;
    border-width: 0 1px 1px 0;
}

.crop-marks i + i {
    border-width: 0 0 1px 1px;
}

.para {
    width: 9px;
    height: 9px;
}

.doc-line {
    padding-left: 7px;
    font-size: 21px;
    line-height: 31px;
}

.doc-table {
    margin-left: -1px;
    border-collapse: collapse;
    line-height: 30px;
    color: #1c2f70;
}

.doc-table td {
    width: 104px;
    height: 31px;
    padding: 0 2px 0 0;
    text-align: right;
    border: 1px solid #a5a5a5;
}

.doc-table .row-end {
    width: 11px;
    padding: 0;
    border: none;
}

.canvas {
    position: relative;
    height: 503px;
    margin: -3px -4px 0 -9px;
    padding: 10px;
    background: linear-gradient(135deg, #fff 38%, #000 38% 62%, #fff 62%) 0 0 / 4px 4px;
}

.canvas-inner {
    position: relative;
    height: 100%;
    background: #fff;
}

.hold {
    position: absolute;
    width: 25px;
    height: 25px;
    border: 0 solid #000;
}

.tl { top: 1px; left: 1px; border-width: 5px 0 0 5px; }
.tc { top: 1px; left: 0; right: 0; margin: 0 auto; border-width: 5px 0 0; }
.tr { top: 1px; right: 0; border-width: 5px 5px 0 0; }
.ml { top: 0; bottom: 0; left: 1px; margin: auto 0; border-width: 0 0 0 5px; }
.mr { top: 0; bottom: 0; right: 0; margin: auto 0; border-width: 0 5px 0 0; }
.bl { bottom: 0; left: 1px; border-width: 0 0 5px 5px; }
.bc { bottom: 0; left: 0; right: 0; margin: 0 auto; border-width: 0 0 5px; }
.br { bottom: 0; right: 0; border-width: 0 5px 5px 0; }

.text-box {
    position: absolute;
    left: 98px;
    top: 53px;
    width: 164px;
    height: 164px;
    padding: 10px;
    background: linear-gradient(135deg, #fff 38%, #000 38% 62%, #fff 62%) 0 0 / 4px 4px;
}

.text-body {
    height: 100%;
    padding: 7px 14px;
    background: #fff;
    border: 1px solid #000;
}

.text-body p {
    height: 31px;
    font-size: 21px;
    line-height: 31px;
}

.typo {
    text-decoration: underline wavy #35a335 1px;
    text-underline-offset: 3px;
}

.text-body .cursor-line {
    height: 26px;
    line-height: 26px;
    border-left: 2px solid #000;
}

.cursor-line .para {
    margin-left: -2px;
}

.dot {
    position: absolute;
    width: 9px;
    height: 9px;
    border: 1px solid #000;
    border-radius: 50%;
    background: #fff;
}

.d1, .d2, .d3 { top: 0; }
.d4, .d5 { top: 78px; }
.d6, .d7, .d8 { bottom: 0; }
.d1, .d4, .d6 { left: 0; }
.d2, .d7 { left: 78px; }
.d3, .d5, .d8 { right: 0; }

.pointer {
    position: absolute;
    left: 668px;
    top: 433px;
}

.h-scroll {
    flex: none;
    height: 28px;
    padding-bottom: 2px;
    display: flex;
    align-items: center;
    background: #f0f0f0;
}

.h-scroll button {
    width: 26px;
    height: 26px;
}

.h-scroll .active {
    background: #f5bd78;
    border: 1px solid #000080;
}

.h-thumb {
    flex: 1;
    height: 24px;
    display: flex;
    align-items: center;
    justify-content: center;
    gap: 2px;
    border: 1px solid #999;
    border-radius: 2px;
    background: linear-gradient(#f4f4f4, #d9d9db 45%, #c9c9cc);
}

.h-thumb i {
    width: 3px;
    height: 11px;
    border-left: 2px solid #555;
    background: #fff;
}

.v-scroll {
    flex: none;
    width: 28px;
    padding-bottom: 28px;
    display: flex;
    flex-direction: column;
    background: #f0f0f0;
    border-right: 3px solid #d8e2f3;
}

.split {
    height: 14px;
    border: 1px solid #777;
    border-width: 0 2px 2px 0;
}

.v-scroll button {
    height: 26px;
}

.v-track {
    flex: 1;
}

.v-thumb {
    height: 308px;
    margin: 2px 1px 0;
    display: flex;
    flex-direction: column;
    align-items: center;
    justify-content: center;
    gap: 2px;
    border: 1px solid #999;
    border-radius: 2px;
    background: linear-gradient(to right, #f4f4f4, #d9d9db 45%, #c9c9cc);
}

.v-thumb i, .list-thumb i {
    width: 12px;
    height: 3px;
    border-top: 2px solid #666;
    background: #fff;
}

/* task pane */
.pane {
    flex: none;
    width: 306px;
    display: flex;
    flex-direction: column;
    padding: 0 2px 2px 3px;
    background: #c2d6f8;
}

.pane-head {
    flex: none;
    height: 40px;
    display: flex;
    align-items: center;
    gap: 10px;
    padding: 1px 9px 0 5px;
    background: linear-gradient(#dde9fc, #c4d7f8 50%, #85a4e2);
}

.pane-head .grip {
    height: 27px;
    margin-right: -4px;
}

.pane-head h2 {
    flex: 1;
}

.pane-nav {
    flex: none;
    display: flex;
    align-items: center;
    height: 28px;
    background: linear-gradient(to right, #4d73c9 126px, #ddeafb 126px);
}

.pane-nav button {
    width: 42px;
    height: 22px;
    border-right: 1px solid #d5e0f7;
}

.pane-nav button:last-child {
    border: none;
}

.pane-body {
    flex: 1;
    min-height: 0;
    display: flex;
    flex-direction: column;
    padding: 0 8px 19px 9px;
    background: #ddeafb;
    font-family: "Liberation Serif", "Noto Sans CJK SC", serif;
    font-weight: 300;
}

.pane-rule {
    flex: none;
    height: 20px;
    margin-top: 14px;
    line-height: 18px;
    font-weight: 300;
    border-bottom: 1px solid #8aa5dc;
}

.pane-rule.first {
    margin-top: 8px;
}

.pane-rule.options {
    margin-top: 10px;
}

.sample {
    flex: none;
    height: 36px;
    margin: 8px 2px 0 14px;
    border: 1px solid #7b8bab;
    background: #fff;
}

.sample.tall {
    height: 48px;
    margin-top: 5px;
    padding-left: 12px;
    font-size: 21px;
    line-height: 46px;
}

.check {
    flex: none;
    display: flex;
    align-items: center;
    gap: 7px;
    height: 19px;
    margin: 9px 0 0 14px;
    white-space: nowrap;
}

.sample + .check {
    margin-top: 6px;
}

.check input {
    appearance: none;
    flex: none;
    width: 19px;
    height: 19px;
    margin: 0;
    border: 1px solid #8e8f8f;
    background: linear-gradient(135deg, #cfd3da, #f6f6f6);
    box-shadow: inset 0 0 0 2px #f4f4f4;
}

.check input:checked::before {
    content: "✓";
    display: block;
    font: bold 17px/16px "DejaVu Sans", sans-serif;
    text-align: center;
    color: #3f4c8c;
}

.check input:disabled {
    border-color: #bcbcbc;
    background: #fbfbfb;
}

.off {
    color: #8f959e;
}

.diff-list {
    flex: 1;
    min-height: 0;
    display: flex;
    justify-content: space-between;
    margin: 8px 6px 0 14px;
    border: 1px solid #7b8bab;
    background: #fff;
}

.diff-list p {
    padding-left: 2px;
    font-weight: 300;
}

.list-scroll {
    width: 25px;
    display: flex;
    flex-direction: column;
    background: #f3f3f3;
}

.list-scroll button {
    height: 26px;
}

.list-scroll .down {
    margin-top: auto;
}

.list-thumb {
    height: 26px;
    margin: 0 1px;
    display: flex;
    flex-direction: column;
    align-items: center;
    justify-content: center;
    gap: 2px;
    border: 1px solid #999;
    background: linear-gradient(to right, #f4f4f4, #cfcfd2);
}

/* floating toolbars */
.float {
    position: absolute;
    padding: 8px;
    background: #3163c5;
}

.float-canvas {
    top: 77px;
    right: 137px;
    width: 360px;
}

.float-textbox {
    top: 17px;
    right: 343px;
    width: 154px;
}

.float-box {
    border: 1px solid #cfe0fb;
    border-radius: 2px;
}

.float-head {
    display: flex;
    align-items: center;
    height: 26px;
    gap: 11px;
    padding: 0 8px 0 2px;
    color: #fff;
    background: #3163c5;
}

.float-head span {
    flex: 1;
}

.float-tools {
    display: flex;
    align-items: center;
    height: 34px;
    background: linear-gradient(#e0eafd, #c8dafa 40%, #9bb7ea);
}

.float-textbox .tool {
    flex: 1;
}

.text-tool {
    gap: 6px;
    padding: 0 4px;
}

.text-tool.off svg {
    opacity: 0.5;
}

.float-canvas .sep {
    margin-left: auto;
}

/* drawing toolbar */
.draw-row {
    flex: none;
    display: flex;
    height: 38px;
    border-bottom: 1px solid #7b8db0;
}

.drawing .menu-tool {
    gap: 4px;
    padding: 0 6px 0 4px;
}

.drawing {
    height: 37px;
}

.cap.low {
    margin-left: 2px;
}

.wordart {
    font: bold 26px "Liberation Serif", serif;
    color: #3d6acb;
}

/* status bar */
.statusbar {
    flex: none;
    display: flex;
    gap: 5px;
    height: 26px;
    padding: 2px 0 1px 5px;
    background: #f0f0f0;
    border-bottom: 1px solid #234;
    font-family: "Liberation Serif", "Noto Sans CJK SC", serif;
    font-weight: 300;
}

.cell {
    padding: 0 2px;
    line-height: 22px;
    white-space: pre;
    border: 1px solid #d6d6d6;
}

.cell.off {
    color: #a5a5a5;
}

.pages {
    display: grid;
    grid-template-columns: 90px 68px auto;
    width: 272px;
    padding-left: 54px;
}

.position {
    display: flex;
    width: 312px;
    padding: 0 4px;
}

.position .off {
    margin-left: auto;
    padding-right: 28px;
}

.lang {
    width: 95px;
}

.book {
    width: 58px;
    text-align: center;
}

.blank {
    width: 42px;
}

/* taskbar */
.taskbar {
    position: relative;
    flex: none;
    display: flex;
    align-items: center;
    height: 56px;
    padding-left: 14px;
    background: linear-gradient(to right, #27699b, #2b7fb0 10%, #48a7cf 16%, #5ab4d8 28%, #3b97cb 45%, #2c7fbd 58%, #2367ad 82%, #1b4878 86%, #173d6b);
}

.aurora {
    position: absolute;
    left: 0;
    width: 100%;
    height: 100%;
}

.taskbar button, .tray, .clock {
    position: relative;
}

.start {
    width: 52px;
}

.app {
    width: 76px;
    height: 54px;
    margin-left: 1px;
}

.start + .app {
    margin-left: 20px;
}

.app.running {
    margin-left: 4px;
    border: 1px solid #e8f6fc;
    border-radius: 3px;
    background: linear-gradient(#c2e4f1, #93cbe2);
}

.tray {
    margin-left: auto;
    display: flex;
    align-items: center;
    gap: 12px;
}

.tray svg:first-child {
    margin-right: 12px;
}

.clock {
    display: flex;
    flex-direction: column;
    align-items: center;
    width: 124px;
    padding: 2px 0 0 8px;
    font-size: 20px;
    line-height: 25px;
    color: #fff;
}

.show-desktop {
    width: 14px;
    height: 56px;
    border: 1px solid #7f9bbb;
    background: linear-gradient(135deg, #4f7196, #1b4068);
}

.lang-bar {
    position: absolute;
    right: 0;
    bottom: 56px;
    width: 131px;
    height: 33px;
    display: flex;
    align-items: center;
    justify-content: space-between;
    padding: 0 5px;
    font: 18px "Liberation Serif", serif;
    color: #fff;
    background: linear-gradient(#a9aeb0, #686c6e 45%, #4b4f51);
}

.lang-grip {
    width: 14px;
    height: 22px;
    background: radial-gradient(circle, #222 35%, transparent 40%) 0 0 / 5px 8px;
}

.help {
    width: 20px;
    height: 20px;
    font: bold 16px/20px "Open Sans", sans-serif;
    text-align: center;
    border-radius: 50%;
    background: #1a24c4;
    box-shadow: 0 0 0 1px #d8dcf4;
}
```
